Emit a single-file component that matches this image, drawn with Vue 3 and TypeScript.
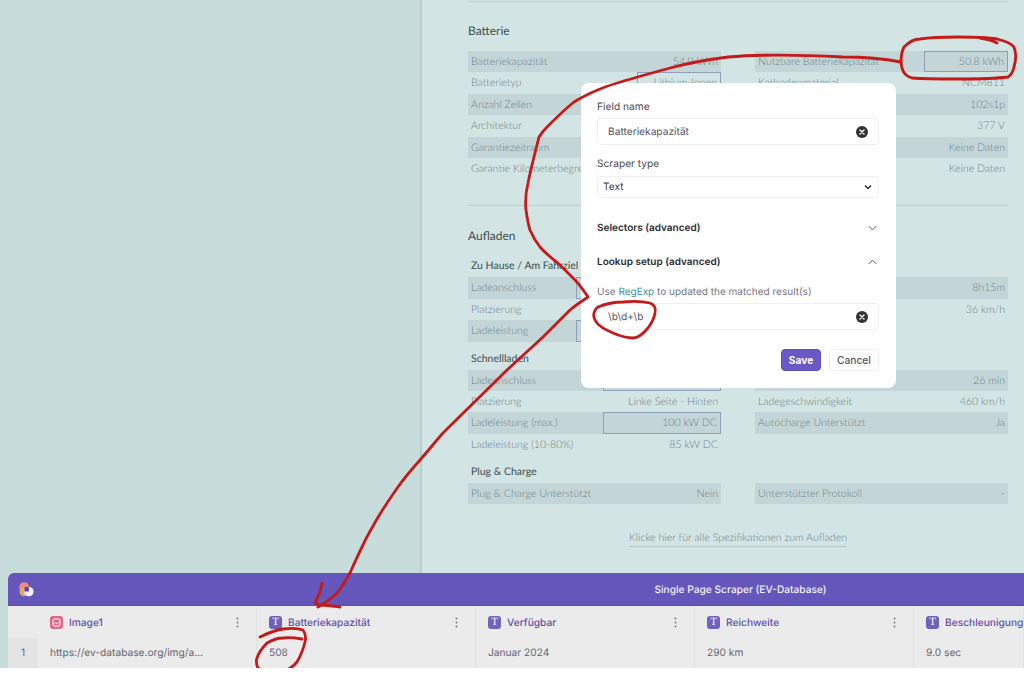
<script setup lang="ts">
interface Row { label: string; value: string; box?: string }
interface Group { title?: string; left: Row[]; right: Row[] }
interface Section { heading: string; groups: Group[] }

const sections: Section[] = [
  {
    heading: 'Batterie',
    groups: [
      {
        left: [
          { label: 'Batteriekapazität', value: '54.0 kWh' },
          { label: 'Batterietyp', value: 'Lithium-Ionen', box: 'box-s' },
          { label: 'Anzahl Zellen', value: '' },
          { label: 'Architektur', value: '' },
          { label: 'Garantiezeitraum', value: '' },
          { label: 'Garantie Kilometerbegrenzung', value: '' },
        ],
        right: [
          { label: 'Nutzbare Batteriekapazität', value: '50.8 kWh', box: 'box-s' },
          { label: 'Kathodenmaterial', value: 'NCM811' },
          { label: '', value: '102s1p' },
          { label: '', value: '377 V' },
          { label: '', value: 'Keine Daten' },
          { label: '', value: 'Keine Daten' },
        ],
      },
    ],
  },
  {
    heading: 'Aufladen',
    groups: [
      {
        title: 'Zu Hause / Am Fahrziel',
        left: [
          { label: 'Ladeanschluss', value: '', box: 'box-l' },
          { label: 'Platzierung', value: '' },
          { label: 'Ladeleistung', value: '', box: 'box-l' },
        ],
        right: [
          { label: '', value: '8h15m' },
          { label: '', value: '36 km/h' },
        ],
      },
      {
        title: 'Schnellladen',
        left: [
          { label: 'Ladeanschluss', value: '', box: 'box-m' },
          { label: 'Platzierung', value: 'Linke Seite - Hinten' },
          { label: 'Ladeleistung (max.)', value: '100 kW DC', box: 'box-m' },
          { label: 'Ladeleistung (10-80%)', value: '85 kW DC' },
        ],
        right: [
          { label: '', value: '26 min' },
          { label: 'Ladegeschwindigkeit', value: '460 km/h' },
          { label: 'Autocharge Unterstützt', value: 'Ja' },
        ],
      },
      {
        title: 'Plug & Charge',
        left: [{ label: 'Plug & Charge Unterstützt', value: 'Nein' }],
        right: [{ label: 'Unterstützter Protokoll', value: '-' }],
      },
    ],
  },
]

const columns = [
  { name: 'Image1', value: 'https://ev-database.org/img/a...', kind: 'image' },
  { name: 'Batteriekapazität', value: '508', kind: 'text' },
  { name: 'Verfügbar', value: 'Januar 2024', kind: 'text' },
  { name: 'Reichweite', value: '290 km', kind: 'text' },
  { name: 'Beschleunigung', value: '9.0 sec', kind: 'text' },
]
</script>

<template>
  <div class="page">
    <aside class="side"></aside>
    <main class="content">
      <section v-for="s in sections" :key="s.heading" class="section">
        <h2 class="heading">{{ s.heading }}</h2>
        <div v-for="(g, gi) in s.groups" :key="gi" class="group">
          <h3 v-if="g.title" class="group-title">{{ g.title }}</h3>
          <div class="cols">
            <div v-for="(list, li) in [g.left, g.right]" :key="li" class="col">
              <div v-for="(r, ri) in list" :key="ri" class="row" :class="{ odd: ri % 2 === 0 }">
                <span class="label">{{ r.label }}</span>
                <span class="value" :class="r.box">{{ r.value }}</span>
              </div>
            </div>
          </div>
        </div>
      </section>
      <div class="more-wrap">
        <a class="more">Klicke hier für alle Spezifikationen zum Aufladen</a>
      </div>
    </main>

    <div class="modal">
      <label class="field-label">Field name</label>
      <div class="control tall">
        <span class="control-text">Batteriekapazität</span>
        <svg class="clear" viewBox="0 0 12 12"><circle cx="6" cy="6" r="6" fill="#333" /><path d="M4 4l4 4M8 4l-4 4" stroke="#fff" stroke-width="1.4" stroke-linecap="round" /></svg>
      </div>
      <label class="field-label second">Scraper type</label>
      <div class="control short">
        <span class="select-text">Text</span>
        <svg class="sel-chev" viewBox="0 0 8 6"><path d="M1 1.5l3 3 3-3" fill="none" stroke="#222" stroke-width="1.3" /></svg>
      </div>
      <div class="acc first">
        <strong>Selectors (advanced)</strong>
        <svg class="chev" viewBox="0 0 10 6"><path d="M1 1l4 4 4-4" fill="none" stroke="#555" stroke-width="1.1" /></svg>
      </div>
      <div class="acc">
        <strong>Lookup setup (advanced)</strong>
        <svg class="chev" viewBox="0 0 10 6"><path d="M1 5l4-4 4 4" fill="none" stroke="#555" stroke-width="1.1" /></svg>
      </div>
      <p class="hint">Use <span class="link">RegExp</span> to updated the matched result(s)</p>
      <div class="control tall">
        <span class="control-text">\b\d+\b</span>
        <svg class="clear" viewBox="0 0 12 12"><circle cx="6" cy="6" r="6" fill="#333" /><path d="M4 4l4 4M8 4l-4 4" stroke="#fff" stroke-width="1.4" stroke-linecap="round" /></svg>
      </div>
      <div class="actions">
        <button class="btn save">Save</button>
        <button class="btn cancel">Cancel</button>
      </div>
    </div>

    <div class="panel">
      <div class="titlebar">
        <svg class="logo" viewBox="0 0 16 16">
          <circle cx="5.6" cy="5.6" r="5.4" fill="#ec8a7e" />
          <circle cx="5.4" cy="10.4" r="4.8" fill="#e7a866" />
          <circle cx="10.6" cy="10.2" r="5" fill="#f4f1f6" />
          <rect x="5.8" y="5.4" width="4.8" height="4.8" rx="1" fill="#5a48a8" />
        </svg>
        <span class="title">Single Page Scraper (EV-Database)</span>
      </div>
      <div class="table">
        <div class="num head"></div>
        <div v-for="c in columns" :key="c.name" class="cell head">
          <span class="ticon" :class="c.kind">
            <svg v-if="c.kind === 'image'" viewBox="0 0 13 13" class="img-glyph"><rect x="3" y="3" width="7" height="7" rx="1.5" fill="none" stroke="#fff" stroke-width="1" /><path d="M3.5 8.5l2-2 1.5 1.2 2-2" fill="none" stroke="#fff" stroke-width="0.9" /></svg>
            <template v-else>T</template>
          </span>
          <span class="col-name">{{ c.name }}</span>
          <svg class="dots" viewBox="0 0 3 11"><circle cx="1.5" cy="1.5" r="0.9" /><circle cx="1.5" cy="5.5" r="0.9" /><circle cx="1.5" cy="9.5" r="0.9" /></svg>
        </div>
        <div class="num">1</div>
        <div v-for="c in columns" :key="c.name + 'v'" class="cell">{{ c.value }}</div>
      </div>
    </div>

    <svg class="ink" viewBox="0 0 1024 675">
      <g fill="none" stroke="#c41a1a" stroke-width="2.8" stroke-linecap="round" stroke-linejoin="round">
        <path d="M901 62C880 58 862 57 843 57C805 55 762 54 728 57C705 60 688 63 670 68C645 75 625 80 605 87C592 92 582 97 574 102C564 110 555 119 547 127C543 131 541 134 539 137C535 153 531 168 528 183C526 191 525 200 526 210C527 217 528 224 530 230C533 237 536 242 540 247C546 254 553 259 560 265C565 270 570 275 575 280C580 285 584 291 588 297C582 301 576 305 570 310C561 319 552 328 543 337C531 348 519 359 507 370C486 391 464 412 443 433C435 442 428 451 420 460C412 469 405 477 398 487C391 497 384 507 377 519C372 528 367 536 363 545C358 555 354 564 350 573C346 580 342 587 337 593C331 599 325 603 318 607" />
        <path d="M322 583C321 590 318 597 315 603L320 605C327 605 333 606 340 607" />
        <path d="M901 62C901 55 902 51 904 47C909 42 914 39 920 39C933 37 946 37 958 37C972 37 985 37 997 39C1005 41 1011 43 1014 47C1016 52 1016 60 1014 67C1013 72 1011 75 1008 77C992 79 975 79 958 79C942 79 926 79 912 78C905 76 902 72 901 62Z" />
        <path d="M980 38C987 39 992 40 997 43" />
        <path d="M598 307C608 303 615 302 623 302C632 301 642 301 650 303C655 305 656 309 655 313C654 319 651 324 648 328C643 334 638 338 633 338C626 338 620 336 613 333C606 330 600 327 597 323C594 319 593 316 594 313C595 310 596 308 598 307Z" />
        <path d="M260 637C268 633 276 630 283 629C291 628 298 628 303 630C306 634 306 638 305 642C303 650 300 657 297 662C292 668 286 671 280 672C271 672 263 671 258 668C256 664 256 661 257 658C259 652 263 647 267 643C272 640 277 638 283 638C290 637 296 638 302 639" />
      </g>
    </svg>
  </div>
</template>

<style>
html, body { margin: 0; background: #fff; }
</style>

<style scoped>
.page {
  position: relative;
  display: flex;
  width: 1024px;
  height: 668px;
  background: #c9dcdc;
  font-family: Lato, "Liberation Sans", sans-serif;
  text-rendering: geometricPrecision;
}
.side {
  width: 420px;
  flex: none;
  border-right: 2px solid #b9cdce;
}
.content {
  flex: 1;
  box-sizing: border-box;
  padding: 1px 16px 0 46px;
  background: #d3e4e4;
  color: #6e8284;
  font-size: 10.6px;
  font-weight: 300;
}
.section {
  border-top: 1px solid #bdd0d0;
  padding: 21px 0 26px;
}
.heading {
  margin: 0;
  font-size: 12px;
  line-height: 16px;
  font-weight: 400;
  color: #3d4f50;
}
.section + .section { padding: 22px 0 0; }
.section:first-child .heading { margin-bottom: 12px; }
.section + .section .heading { margin-bottom: 12px; }
.group-title {
  margin: 0 0 5px;
  padding: 3px 3px 0;
  font-size: 10.5px;
  line-height: 14px;
  height: 16px;
  box-sizing: border-box;
  font-weight: 400;
  color: #3d4f50;
}
.group + .group { margin-top: 7px; }
.cols {
  display: grid;
  grid-template-columns: 1fr 1fr;
  column-gap: 34px;
}
.row {
  display: flex;
  justify-content: space-between;
  height: 21.4px;
  line-height: 23px;
  box-sizing: border-box;
}
.row.odd { background: #c3d5d7; }
.label { padding-left: 3px; white-space: nowrap; }
.value {
  text-align: right;
  padding-right: 3px;
  box-sizing: border-box;
  white-space: nowrap;
}
.box-s, .box-m, .box-l { height: 100%; border: 1px solid #8d9fbb; line-height: 21px; }
.box-s { width: 84px; }
.box-m { width: 118px; }
.box-l { width: 145px; }
.more-wrap {
  display: flex;
  justify-content: center;
  margin-top: 26px;
}
.more {
  border-bottom: 1px solid #b7caca;
  line-height: 16px;
}

.modal {
  position: absolute;
  left: 581px;
  top: 83px;
  width: 315px;
  height: 305px;
  box-sizing: border-box;
  padding: 17px 17px 0 16px;
  background: #fff;
  border-radius: 8px;
  font-family: Inter, "Liberation Sans", sans-serif;
  font-size: 10.2px;
  color: #4a4a50;
}
.field-label {
  display: block;
  line-height: 14px;
  margin-bottom: 4px;
}
.field-label.second { margin-top: 12px; margin-bottom: 5px; }
.control {
  display: flex;
  align-items: center;
  justify-content: space-between;
  box-sizing: border-box;
  border: 1px solid #f0f0f2;
  border-radius: 4px;
}
.tall { height: 27px; padding: 0 10px; }
.short { height: 22px; padding: 0 6px 0 5px; }
.control-text { color: #55555c; }
.select-text { color: #3c3c42; }
.clear { width: 12px; height: 12px; }
.sel-chev { width: 8px; height: 6px; }
.acc {
  display: flex;
  align-items: center;
  justify-content: space-between;
  height: 14px;
  margin-top: 20px;
  padding-right: 2px;
  color: #2c2c30;
  font-size: 10px;
}
.acc.first { margin-top: 23px; }
.acc strong { font-weight: 600; }
.chev { width: 9px; height: 6px; }
.hint {
  margin: 16px 0 4px;
  line-height: 14px;
  font-size: 10px;
  color: #77777d;
}
.link { color: #3f8f95; }
.actions {
  display: flex;
  justify-content: flex-end;
  gap: 8px;
  margin-top: 19px;
}
.btn {
  height: 22px;
  padding: 0;
  border-radius: 4px;
  font-family: inherit;
  font-size: 10.2px;
}
.save {
  width: 40px;
  background: #6a58c4;
  border: 1px solid #6050b5;
  color: #fff;
  font-weight: 700;
}
.cancel {
  width: 50px;
  background: #fff;
  border: 1px solid #f0f0f2;
  color: #55555c;
  font-weight: 500;
}

.panel {
  position: absolute;
  left: 8px;
  right: 0;
  top: 573px;
  height: 95px;
  overflow: hidden;
  background: #ebebeb;
  border-radius: 6px 0 0 0;
  font-family: Inter, "Liberation Sans", sans-serif;
  font-size: 10.2px;
}
.titlebar {
  position: relative;
  display: flex;
  align-items: center;
  justify-content: center;
  height: 33px;
  box-sizing: border-box;
  padding-top: 1px;
  border-bottom: 1px solid #5a4db0;
  background: #6556bb;
  color: #f3f1fb;
}
.logo {
  position: absolute;
  left: 11px;
  top: 9px;
  width: 15px;
  height: 15px;
}
.title { font-weight: 500; margin-left: 449px; }
.table {
  display: grid;
  grid-template-columns: 30px repeat(4, 219px) 1fr;
  grid-template-rows: 31px 30px;
  margin-top: 1px;
  color: #66666c;
  background: #ebebeb;
}
.num {
  display: flex;
  align-items: center;
  justify-content: center;
  box-sizing: border-box;
  background: #e4e4e4;
}
.num.head { background: #ebebeb; }
.cell {
  display: flex;
  align-items: center;
  gap: 6px;
  padding: 0 12px;
  box-sizing: border-box;
  border-right: 1px solid #e2e2e2;
  white-space: nowrap;
  overflow: hidden;
}
.cell.head { color: #5c50a8; font-weight: 500; }
.ticon {
  width: 13px;
  height: 13px;
  flex: none;
  border-radius: 3px;
  background: #6f62bf;
  color: #fff;
  font-family: "Liberation Serif", serif;
  font-size: 11px;
  line-height: 13px;
  text-align: center;
}
.ticon.image { background: #d96b8b; }
.img-glyph { display: block; width: 13px; height: 13px; }
.col-name { flex: 1; }
.dots {
  width: 3px;
  height: 11px;
  flex: none;
  margin-right: 5px;
  fill: #77777d;
}

.ink {
  position: absolute;
  left: 0;
  top: 0;
  width: 1024px;
  height: 675px;
  pointer-events: none;
}
</style>
